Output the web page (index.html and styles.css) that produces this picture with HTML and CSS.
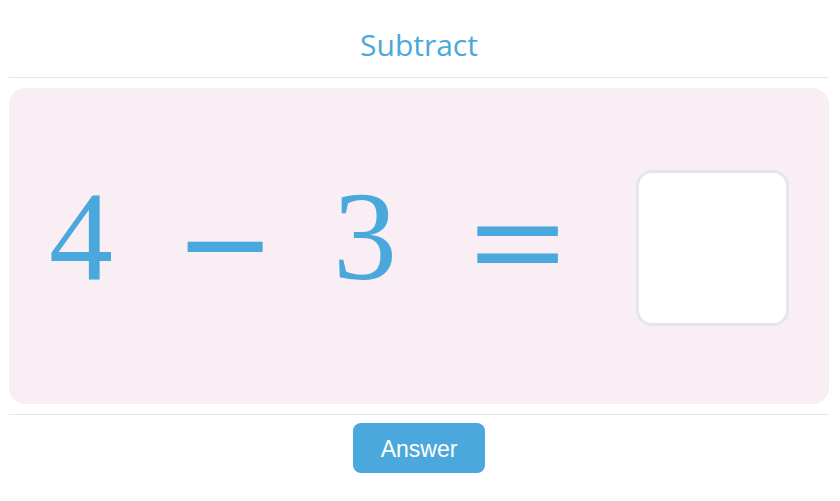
FILE: index.html
```html
<!DOCTYPE html>
<html lang="en">
<head>
<meta charset="utf-8">
<title>Subtract</title>
<link rel="stylesheet" href="styles.css">
</head>
<body>
<div class="app">
  <header class="header">
    <h1 class="title">Subtract</h1>
  </header>
  <section class="panel">
    <div class="equation">
      <span class="tok tok-num">4</span>
      <span class="tok tok-op tok-minus">&minus;</span>
      <span class="tok tok-num">3</span>
      <span class="tok tok-op tok-eq">=</span>
      <div class="answer-box"></div>
    </div>
  </section>
  <div class="footer">
    <button class="btn" type="button">Answer</button>
  </div>
</div>
</body>
</html>
```
FILE: styles.css
```css
html, body {
  margin: 0;
  padding: 0;
  background: #ffffff;
}
.app {
  margin: 0 11px 0 9px;
}
.header {
  height: 77px;
  border-bottom: 1px solid #e6e6e6;
  display: flex;
  align-items: center;
  justify-content: center;
}
.title {
  margin: 0;
  padding-top: 12px;
  font-family: "Open Sans", sans-serif;
  font-weight: 400;
  font-size: 30px;
  color: #4aa8dc;
}
.panel {
  margin-top: 10px;
  height: 316px;
  background: #f9eef4;
  border-radius: 16px;
  display: flex;
  align-items: center;
}
.equation {
  display: grid;
  grid-template-columns: 144px 144px 136px 170px auto;
  align-items: center;
  width: 100%;
}
.tok {
  text-align: center;
  font-family: "Liberation Serif", serif;
  line-height: 1;
  color: #4aa8dc;
}
.tok-num {
  font-size: 128px;
  padding-bottom: 20px;
}
.tok-op {
  font-size: 148px;
  font-weight: 700;
}
.tok-minus {
  transform: scaleX(1.09);
}
.tok-eq {
  transform: translateY(-2px) scale(1.17, 0.92);
}
.answer-box {
  margin-left: 33px;
  margin-top: 4px;
  width: 147px;
  height: 150px;
  background: #ffffff;
  border: 3px solid #e6e6ea;
  border-radius: 16px;
}
.footer {
  margin-top: 10px;
  border-top: 1px solid #e6e6e6;
  padding-top: 8px;
  display: flex;
  justify-content: center;
}
.btn {
  width: 132px;
  height: 50px;
  border: none;
  border-radius: 8px;
  background: #4aa8dc;
  color: #ffffff;
  font-family: "Liberation Sans", Arial, sans-serif;
  font-size: 23px;
  padding: 2px 0 0;
}
```
